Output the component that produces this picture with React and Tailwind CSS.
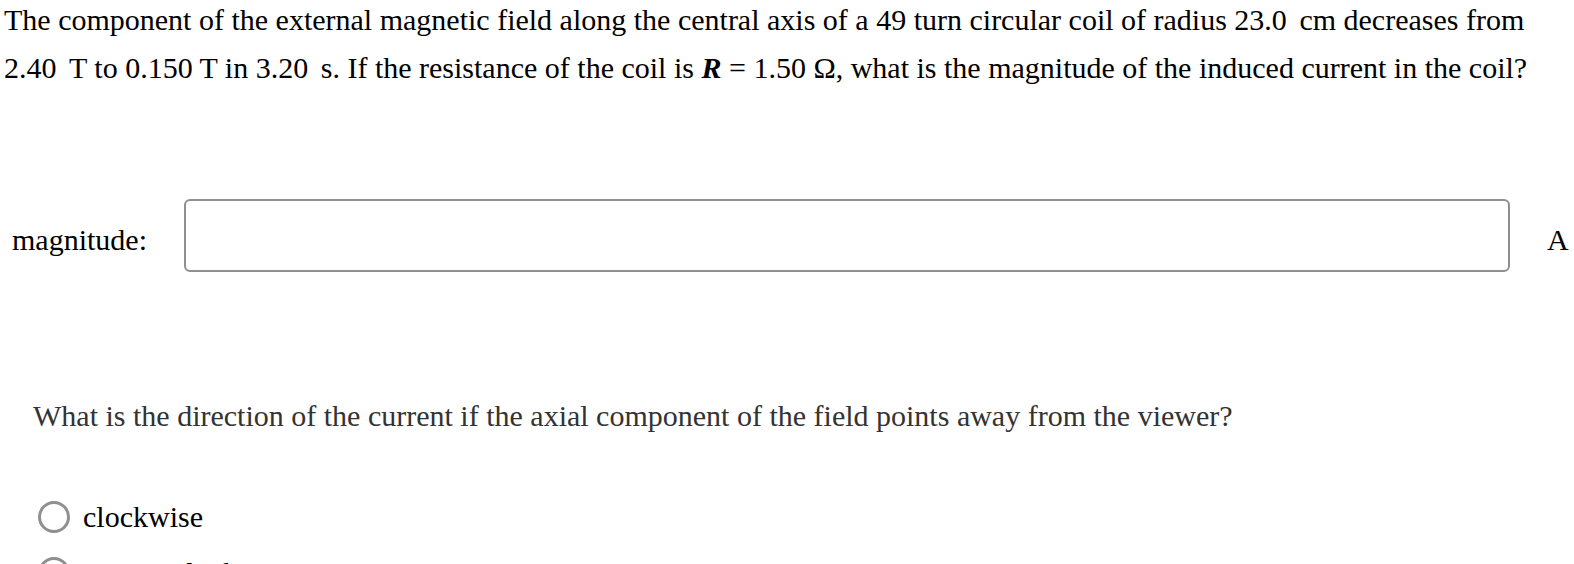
import React from "react";

const App = () => {
  return (
    <div className="w-[1574px] h-[564px] overflow-hidden bg-white text-black font-['Liberation_Serif','Times_New_Roman',serif]">
      {/* Question text */}
      <p className="text-[30px] leading-[48px] pl-[4px] -mt-[4px] whitespace-nowrap">
        The component of the external magnetic field along the central axis of a 49 turn circular coil of radius 23.0{" "}
        <span className="ml-[5px]">cm</span> decreases from
        <br />
        2.40 <span className="ml-[5px]">T</span> to 0.150 T in 3.20 <span className="ml-[5px]">s</span>. If the resistance of the coil is{" "}
        <i className="font-bold">R</i> = 1.50 Ω, what is the magnitude of the induced current in the coil?
      </p>

      {/* Magnitude input */}
      <div className="flex items-center mt-[107px] h-[73px]">
        <label className="text-[30px] w-[184px] shrink-0 pl-[12px] mt-[8px]">magnitude:</label>
        <input
          type="text"
          className="w-[1326px] min-w-[1326px] shrink-0 h-[73px] border-2 border-[#8f8f8f] rounded-[6px] outline-none"
        />
        <span className="text-[30px] ml-[37px] mt-[8px]">A</span>
      </div>

      {/* Direction */}
      <p className="text-[30px] leading-[48px] text-[#333333] pl-[33px] mt-[120px]">
        What is the direction of the current if the axial component of the field points away from the viewer?
      </p>

      <div className="flex flex-col gap-[20px] mt-[59px] pl-[38px]">
        <label className="flex items-center gap-[13px] text-[30px] leading-[36px]">
          <span className="w-[32px] h-[32px] shrink-0 rounded-full border-[3px] border-[#8f8f8f]"></span>
          clockwise
        </label>
        <label className="flex items-center gap-[13px] text-[30px] leading-[36px]">
          <span className="w-[32px] h-[32px] shrink-0 rounded-full border-[3px] border-[#8f8f8f]"></span>
          counterclockwise
        </label>
      </div>
    </div>
  );
};

export default App;
